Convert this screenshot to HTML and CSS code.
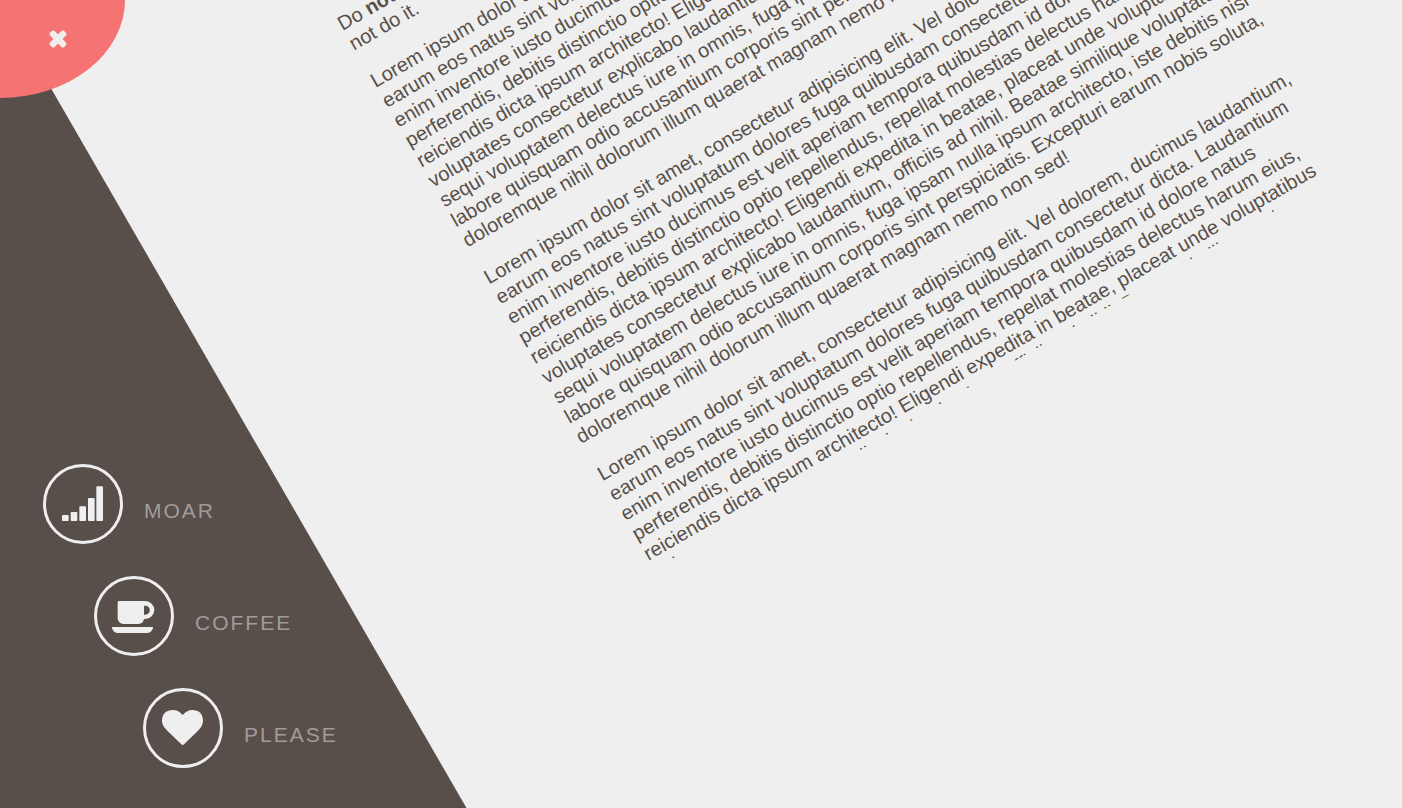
FILE: index.html
```html
<!DOCTYPE html>
<html lang="en">
<head>
<meta charset="UTF-8" />
<meta name="viewport" content="width=device-width, initial-scale=1" />
<title>Rotated page</title>
<link rel="stylesheet" href="styles.css">
</head>
<body>

<main class="page">
  <div class="page-clip">
    <article class="content">
      <p>Do <strong>not</strong><br>not do it.</p>
      <p>Lorem ipsum dolor sit amet, consectetur adipisicing elit. Vel dolorem, ducimus laudantium, earum eos natus sint voluptatum dolores fuga quibusdam consectetur dicta. Laudantium enim inventore iusto ducimus est velit aperiam tempora quibusdam id dolore natus perferendis, debitis distinctio optio repellendus, repellat molestias delectus harum eius, reiciendis dicta ipsum architecto! Eligendi expedita in beatae, placeat unde voluptatibus voluptates consectetur explicabo laudantium, officiis ad nihil. Beatae similique voluptates sequi voluptatem delectus iure in omnis, fuga ipsam nulla ipsum architecto, iste debitis nisi labore quisquam odio accusantium corporis sint perspiciatis. Excepturi earum nobis soluta, doloremque nihil dolorum illum quaerat magnam nemo non sed!</p>
      <p>Lorem ipsum dolor sit amet, consectetur adipisicing elit. Vel dolorem, ducimus laudantium, earum eos natus sint voluptatum dolores fuga quibusdam consectetur dicta. Laudantium enim inventore iusto ducimus est velit aperiam tempora quibusdam id dolore natus perferendis, debitis distinctio optio repellendus, repellat molestias delectus harum eius, reiciendis dicta ipsum architecto! Eligendi expedita in beatae, placeat unde voluptatibus voluptates consectetur explicabo laudantium, officiis ad nihil. Beatae similique voluptates sequi voluptatem delectus iure in omnis, fuga ipsam nulla ipsum architecto, iste debitis nisi labore quisquam odio accusantium corporis sint perspiciatis. Excepturi earum nobis soluta, doloremque nihil dolorum illum quaerat magnam nemo non sed!</p>
      <p>Lorem ipsum dolor sit amet, consectetur adipisicing elit. Vel dolorem, ducimus laudantium, earum eos natus sint voluptatum dolores fuga quibusdam consectetur dicta. Laudantium enim inventore iusto ducimus est velit aperiam tempora quibusdam id dolore natus perferendis, debitis distinctio optio repellendus, repellat molestias delectus harum eius, reiciendis dicta ipsum architecto! Eligendi expedita in beatae, placeat unde voluptatibus voluptates consectetur explicabo laudantium, officiis ad nihil. Beatae similique voluptates</p>
    </article>
  </div>
</main>

<button class="close" aria-label="Close menu">
  <svg viewBox="0 0 20 20"><path d="M3.5 5.2L5.2 3.5L10 8.3L14.8 3.5L16.5 5.2L11.7 10L16.5 14.8L14.8 16.5L10 11.7L5.2 16.5L3.5 14.8L8.3 10Z" /></svg>
</button>

<nav class="menu">
  <a href="#moar">
    <span class="circle">
      <svg viewBox="0 0 222 222">
        <rect x="48" y="144" width="20" height="18" rx="3" />
        <rect x="74" y="135" width="20" height="27" rx="3" />
        <rect x="100" y="118" width="20" height="44" rx="3" />
        <rect x="126" y="93" width="20" height="69" rx="3" />
        <rect x="151" y="58" width="20" height="104" rx="3" />
      </svg>
    </span>
    <span class="label">MOAR</span>
  </a>
  <a href="#coffee">
    <span class="circle">
      <svg viewBox="0 0 222 222">
        <path fill-rule="evenodd" d="M66 66H145A27 27 0 0 1 145 120H141A18 18 0 0 1 124 135H79A17 17 0 0 1 62 118V70Q62 66 66 66ZM141 80V107H145A13 13 0 0 0 145 80Z" />
        <path d="M47 144H166Q169 144 168 147C166 156 158 162 150 162H63C55 162 47 156 45 147Q44 144 47 144Z" />
      </svg>
    </span>
    <span class="label">COFFEE</span>
  </a>
  <a href="#please">
    <span class="circle">
      <svg viewBox="0 0 222 222">
        <path d="M110 72C101 61 91 57 81 57C61 57 48 69 48 89C48 102 57 112 64 119L106 160Q110 164 114 160L156 119C163 112 171 102 171 89C171 69 159 57 139 57C129 57 119 62 110 72Z" />
      </svg>
    </span>
    <span class="label">PLEASE</span>
  </a>
</nav>

</body>
</html>
```
FILE: styles.css
```css
:root {
  --dark: #584f4a;
  --light: #efefef;
  --accent: #f57373;
  --label: #a19c99;
}

* {
  box-sizing: border-box;
}

body {
  margin: 0;
  height: 100vh;
  overflow: hidden;
  position: relative;
  font-family: "Liberation Sans", Arial, Helvetica, sans-serif;
  font-size: 20px;
  line-height: 23px;
  background-color: var(--dark);
  color: var(--dark);
}

/* the sheet swings open around its top left corner */
.page {
  min-height: 200vmax;
  padding-left: 1px;
  background-color: var(--light);
  transform: rotate(-30deg);
  transform-origin: top left;
}

.page-clip {
  height: calc(100vh + 12px);
  overflow: hidden;
}

.content {
  max-width: 820px;
  margin-left: 20%;
  padding-top: 180px;
}

.content p {
  margin: 0 0 20px;
}

.close {
  position: absolute;
  top: 0;
  left: 0;
  width: 125px;
  height: 98px;
  padding: 0 10px 20px 0;
  border: none;
  border-radius: 0 0 100% 0;
  background-color: var(--accent);
  cursor: pointer;
}

.close svg {
  display: block;
  width: 20px;
  height: 20px;
  margin: 0 auto;
  fill: var(--light);
  stroke: var(--light);
  stroke-width: 4;
  stroke-linejoin: round;
}

.menu {
  position: absolute;
  left: 43px;
  bottom: 40px;
  display: flex;
  flex-direction: column;
  gap: 32px;
}

.menu a {
  display: flex;
  align-items: center;
  gap: 21px;
  color: var(--label);
  font-size: 21px;
  letter-spacing: 2px;
  text-decoration: none;
}

.menu a:nth-child(2) {
  margin-left: 51px;
}

.menu a:nth-child(3) {
  margin-left: 100px;
}

.circle {
  width: 80px;
  height: 80px;
  border: 3px solid var(--light);
  border-radius: 50%;
}

.circle svg {
  display: block;
  width: 100%;
  height: 100%;
  fill: var(--light);
}

.label {
  padding-top: 12px;
}

.menu a:hover {
  color: var(--light);
}
```
